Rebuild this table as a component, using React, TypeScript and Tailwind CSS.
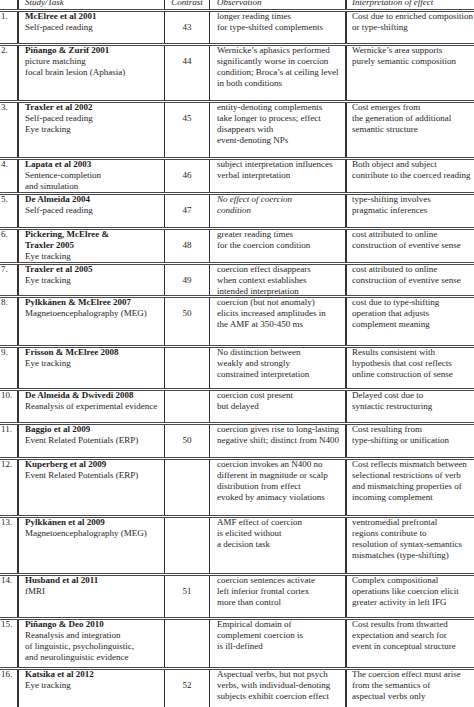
type Row = {
  n: string;
  h: number;
  title: string[];
  method: string[];
  contrast?: string;
  obs: string[];
  obsItalic?: boolean;
  interp: string[];
};

// Row heights follow the scan; separators are 3px double rules on top of each row.
const rows: Row[] = [
  {
    n: "1.", h: 31,
    title: ["McElree et al 2001"], method: ["Self-paced reading"], contrast: "43",
    obs: ["longer reading times", "for type-shifted complements"],
    interp: ["Cost due to enriched composition", "or type-shifting"],
  },
  {
    n: "2.", h: 54,
    title: ["Piñango & Zurif 2001"], method: ["picture matching", "focal brain lesion (Aphasia)"], contrast: "44",
    obs: ["Wernicke’s aphasics performed", "significantly worse in coercion", "condition; Broca’s at ceiling level", "in both conditions"],
    interp: ["Wernicke’s area supports", "purely semantic composition"],
  },
  {
    n: "3.", h: 54,
    title: ["Traxler et al 2002"], method: ["Self-paced reading", "Eye tracking"], contrast: "45",
    obs: ["entity-denoting complements", "take longer to process; effect", "disappears with", "event-denoting NPs"],
    interp: ["Cost emerges from", "the generation of additional", "semantic structure"],
  },
  {
    n: "4.", h: 32,
    title: ["Lapata et al 2003"], method: ["Sentence-completion", "and simulation"], contrast: "46",
    obs: ["subject interpretation influences", "verbal interpretation"],
    interp: ["Both object and subject", "contribute to the coerced reading"],
  },
  {
    n: "5.", h: 32,
    title: ["De Almeida 2004"], method: ["Self-paced reading"], contrast: "47",
    obs: ["No effect of coercion", "condition"], obsItalic: true,
    interp: ["type-shifting involves", "pragmatic inferences"],
  },
  {
    n: "6.", h: 32,
    title: ["Pickering, McElree &", "Traxler 2005"], method: ["Eye tracking"], contrast: "48",
    obs: ["greater reading times", "for the coercion condition"],
    interp: ["cost attributed to online", "construction of eventive sense"],
  },
  {
    n: "7.", h: 30,
    title: ["Traxler et al 2005"], method: ["Eye tracking"], contrast: "49",
    obs: ["coercion effect disappears", "when context establishes", "intended interpretation"],
    interp: ["cost attributed to online", "construction of eventive sense"],
  },
  {
    n: "8.", h: 47,
    title: ["Pylkkänen & McElree 2007"], method: ["Magnetoencephalography (MEG)"], contrast: "50",
    obs: ["coercion (but not anomaly)", "elicits increased amplitudes in", "the AMF at 350-450 ms"],
    interp: ["cost due to type-shifting", "operation that adjusts", "complement meaning"],
  },
  {
    n: "9.", h: 40,
    title: ["Frisson & McElree 2008"], method: ["Eye tracking"],
    obs: ["No distinction between", "weakly and strongly", "constrained interpretation"],
    interp: ["Results consistent with", "hypothesis that cost reflects", "online construction of sense"],
  },
  {
    n: "10.", h: 31,
    title: ["De Almeida & Dwivedi 2008"], method: ["Reanalysis of experimental evidence"],
    obs: ["coercion cost present", "but delayed"],
    interp: ["Delayed cost due to", "syntactic restructuring"],
  },
  {
    n: "11.", h: 32,
    title: ["Baggio et al 2009"], method: ["Event Related Potentials (ERP)"], contrast: "50",
    obs: ["coercion gives rise to long-lasting", "negative shift; distinct from N400"],
    interp: ["Cost resulting from", "type-shifting or unification"],
  },
  {
    n: "12.", h: 55,
    title: ["Kuperberg et al 2009"], method: ["Event Related Potentials (ERP)"],
    obs: ["coercion invokes an N400 no", "different in magnitude or scalp", "distribution from effect", "evoked by animacy violations"],
    interp: ["Cost reflects mismatch between", "selectional restrictions of verb", "and mismatching properties of", "incoming complement"],
  },
  {
    n: "13.", h: 55,
    title: ["Pylkkänen et al 2009"], method: ["Magnetoencephalography (MEG)"],
    obs: ["AMF effect of coercion", "is elicited without", "a decision task"],
    interp: ["ventromedial prefrontal", "regions contribute to", "resolution of syntax-semantics", "mismatches (type-shifting)"],
  },
  {
    n: "14.", h: 41,
    title: ["Husband et al 2011"], method: ["fMRI"], contrast: "51",
    obs: ["coercion sentences activate", "left inferior frontal cortex", "more than control"],
    interp: ["Complex compositional", "operations like coercion elicit", "greater activity in left IFG"],
  },
  {
    n: "15.", h: 47,
    title: ["Piñango & Deo 2010"], method: ["Reanalysis and integration", "of linguistic, psycholinguistic,", "and neurolinguistic evidence"],
    obs: ["Empirical domain of", "complement coercion is", "is ill-defined"],
    interp: ["Cost results from thwarted", "expectation and search for", "event in conceptual structure"],
  },
  {
    n: "16.", h: 50,
    title: ["Katsika et al 2012"], method: ["Eye tracking"], contrast: "52",
    obs: ["Aspectual verbs, but not psych", "verbs, with individual-denoting", "subjects exhibit coercion effect"],
    interp: ["The coercion effect must arise", "from the semantics of", "aspectual verbs only"],
  },
];

function Lines({ lines, className = "" }: { lines: string[]; className?: string }) {
  return (
    <>
      {lines.map((l, i) => (
        <div key={i} className={`whitespace-nowrap ${className}`}>{l}</div>
      ))}
    </>
  );
}

export default function App() {
  return (
    <div className="w-[474px] h-[707px] overflow-hidden bg-white text-[#262626] font-['Liberation_Serif','Times_New_Roman',serif] text-[9px] leading-[11px]">
      {/* Header (cut off at the top of the scan) */}
      <div className="flex h-[9px] overflow-hidden italic">
        <div className="w-[17px]" />
        <div className="w-[147px] border-l-2 border-[#333] pl-[6px]"><div className="-mt-[3px]">Study/Task</div></div>
        <div className="w-[45px] border-l border-[#333] text-center"><div className="-mt-[3px]">Contrast</div></div>
        <div className="w-[136px] border-l border-[#333] pl-[7px]"><div className="-mt-[3px]">Observation</div></div>
        <div className="flex-1 border-l-2 border-[#333] pl-[5px]"><div className="-mt-[3px]">Interpretation of effect</div></div>
      </div>

      {rows.map((r) => (
        <div
          key={r.n}
          className="flex border-t-[3px] border-double border-[#4a4a4a]"
          style={{ height: r.h + 3 }}
        >
          <div className="w-[17px] pl-[1px] -mt-[1px]">{r.n}</div>
          <div className="w-[147px] border-l-2 border-[#333] pl-[6px]">
            <div className="-mt-[1px]">
              <Lines lines={r.title} className="font-bold text-[#1a1a1a]" />
              <Lines lines={r.method} />
            </div>
          </div>
          <div className="w-[45px] border-l border-[#333] text-center pt-[10px]">{r.contrast ?? ""}</div>
          <div className={`w-[136px] border-l border-[#333] pl-[7px] ${r.obsItalic ? "italic" : ""}`}>
            <div className="-mt-[1px]">
              <Lines lines={r.obs} />
            </div>
          </div>
          <div className="flex-1 border-l-2 border-[#333] pl-[5px]">
            <div className="-mt-[1px]">
              <Lines lines={r.interp} />
            </div>
          </div>
        </div>
      ))}
    </div>
  );
}
